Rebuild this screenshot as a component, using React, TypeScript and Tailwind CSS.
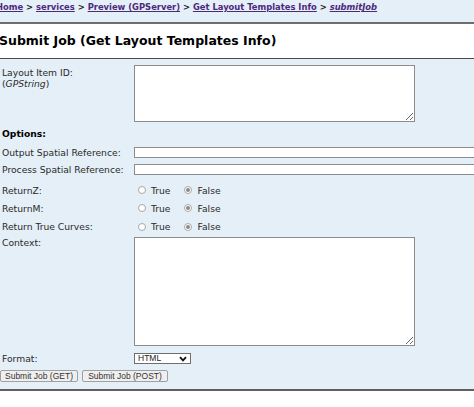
import React from "react";

const crumbs = ["Home", "services", "Preview (GPServer)", "Get Layout Templates Info"];

function Radio({ checked }: { checked?: boolean }) {
  return (
    <span className="flex h-[8px] w-[8px] items-center justify-center rounded-full border border-[#a8a8a8] bg-white">
      {checked && <span className="h-[4px] w-[4px] rounded-full bg-[#8a8a8a]" />}
    </span>
  );
}

function Label({ children }: { children: React.ReactNode }) {
  return <div className="w-[134px] shrink-0 whitespace-nowrap pl-[2px]">{children}</div>;
}

function BoolRow({ label, h }: { label: string; h: string }) {
  return (
    <div className={`flex items-center ${h}`}>
      <Label>{label}</Label>
      <div className="flex items-center pl-[4px]">
        <Radio />
        <span className="ml-[5px]">True</span>
        <span className="ml-[13px]">
          <Radio checked />
        </span>
        <span className="ml-[6px]">False</span>
      </div>
    </div>
  );
}

export default function App() {
  return (
    <div className="h-[407px] w-[474px] overflow-hidden bg-white font-['DejaVu_Sans',sans-serif] text-[#2a2a2a]">
      <div className="h-[22px] bg-[#e5eff7] pt-[1px]">
        <div className="ml-[-4px] whitespace-nowrap text-[8.4px] font-bold leading-[12px] text-[#222]">
          {crumbs.map((c) => (
            <React.Fragment key={c}>
              <a className="text-[#4b2a7b] underline">{c}</a>
              {" > "}
            </React.Fragment>
          ))}
          <a className="italic text-[#4b2a7b] underline">submitJob</a>
        </div>
      </div>
      <div className="h-[2px] bg-[#6e6e6e]" />
      <div className="flex h-[34px] items-center bg-white">
        <h2 className="ml-[-1px] whitespace-nowrap text-[12.5px] font-bold leading-[14px] text-black">
          Submit Job (Get Layout Templates Info)
        </h2>
      </div>
      <div className="h-px bg-[#4a4a4a]" />
      <div className="h-[330px] bg-[#e5eff7] pt-[6px] text-[9.2px] leading-[11px]">
        <div className="flex h-[57px] items-start">
          <div className="w-[134px] shrink-0 pl-[2px] pt-[1.5px]">
            Layout Item ID:
            <br />(<i>GPString</i>)
          </div>
          <textarea className="ml-[-0.5px] h-[57px] w-[281px] border border-[#8c8c8c] bg-white" />
        </div>
        <div className="mt-[6px] pl-[2px] font-bold text-black">Options:</div>
        <div className="mt-[8px] flex h-[11px] items-center">
          <Label>Output Spatial Reference:</Label>
          <div className="h-[11px] w-[360px] shrink-0 border border-[#8c8c8c] bg-white" />
        </div>
        <div className="mt-[6px] flex h-[11px] items-center">
          <Label>Process Spatial Reference:</Label>
          <div className="h-[11px] w-[360px] shrink-0 border border-[#8c8c8c] bg-white" />
        </div>
        <div className="mt-[6px]">
          <BoolRow label="ReturnZ:" h="h-[18px]" />
          <BoolRow label="ReturnM:" h="h-[18px]" />
          <BoolRow label="Return True Curves:" h="h-[19px]" />
        </div>
        <div className="mt-[1px] flex h-[109px] items-start">
          <Label>Context:</Label>
          <textarea className="ml-[-0.5px] h-[109px] w-[281px] border border-[#8c8c8c] bg-white" />
        </div>
        <div className="mt-[7px] flex h-[11px] items-center">
          <Label>Format:</Label>
          <div className="flex h-[11px] w-[57px] items-center justify-between border border-[#6f6f6f] bg-white pl-[3px] pr-[3px] font-['Liberation_Sans',sans-serif] text-[8.5px] text-[#222]">
            <span>HTML</span>
            <svg width="8" height="6" viewBox="0 0 8 6">
              <path d="M1 1.2 L4 4.4 L7 1.2" fill="none" stroke="#111" strokeWidth="1.8" />
            </svg>
          </div>
        </div>
        <div className="mt-[6px] flex h-[12px] items-center gap-[4px] font-['Liberation_Sans',sans-serif] text-[8.5px] text-[#333]">
          <button className="h-[12px] w-[78px] rounded-[2px] border border-[#a0a0a0] bg-[#efefef] leading-[10px]">
            Submit Job (GET)
          </button>
          <button className="h-[12px] w-[86px] rounded-[2px] border border-[#a0a0a0] bg-[#efefef] leading-[10px]">
            Submit Job (POST)
          </button>
        </div>
      </div>
      <div className="h-[2px] bg-[#5f5f5f]" />
    </div>
  );
}
